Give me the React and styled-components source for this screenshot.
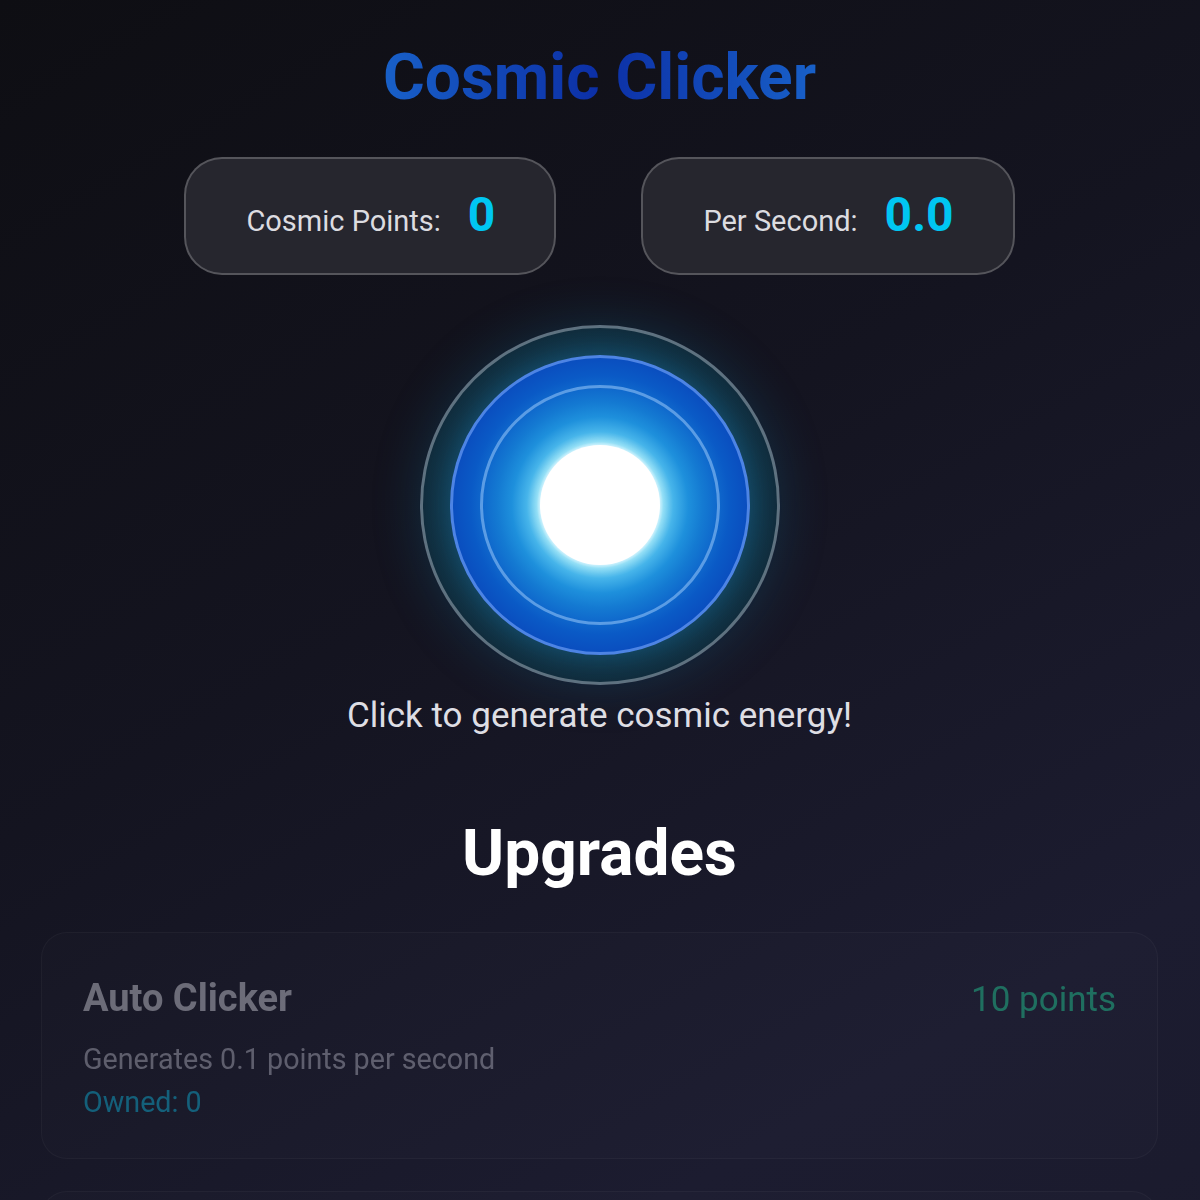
import React from 'react';
import styled, { createGlobalStyle } from 'styled-components';

const GlobalStyle = createGlobalStyle`
  * { box-sizing: border-box; }
  html, body {
    margin: 0;
    padding: 0;
    background: #111118;
  }
  body {
    font-family: Roboto, "Liberation Sans", sans-serif;
    color: #fff;
  }
`;

const Page = styled.div`
  min-height: 1200px;
  padding: 40px 42px 0 41px;
  background: linear-gradient(150deg, #0e0e13 0%, #141420 40%, #1c1c30 75%, #1a1a2c 100%);
  display: flex;
  flex-direction: column;
  align-items: center;
`;

const Title = styled.h1`
  margin: 0;
  font-size: 64px;
  line-height: 1.2;
  font-weight: 700;
  background: linear-gradient(90deg, #1860c8 0%, #0c2fa6 50%, #1860c8 100%);
  -webkit-background-clip: text;
  background-clip: text;
  color: transparent;
`;

const Stats = styled.div`
  display: flex;
  gap: 85px;
  margin-top: 40px;
`;

const StatCard = styled.div`
  display: flex;
  align-items: baseline;
  gap: 27px;
  padding: 27px 59px 30px 60px;
  border-radius: 38px;
  background: #26262e;
  border: 2px solid rgba(255, 255, 255, 0.22);
`;

const StatLabel = styled.span`
  font-size: 29px;
  color: #dcdce0;
`;

const StatValue = styled.span`
  font-size: 48px;
  font-weight: 700;
  color: #00c6f2;
`;

const OrbWrap = styled.div`
  margin-top: 50px;
  width: 360px;
  height: 360px;
  border-radius: 50%;
  border: 3px solid rgba(190, 200, 210, 0.45);
  background: radial-gradient(circle closest-side, #10465e 0%, #0f3a4c 80%, #112c3c 100%);
  box-shadow: 0 0 50px rgba(20, 140, 190, 0.22);
  display: flex;
  align-items: center;
  justify-content: center;
`;

const Orb = styled.button`
  width: 300px;
  height: 300px;
  border-radius: 50%;
  border: 3px solid #4d84e4;
  padding: 0;
  cursor: pointer;
  background: radial-gradient(
    circle closest-side,
    #ffffff 0%,
    #ffffff 40%,
    #8edcf4 43%,
    #46b4ea 50%,
    #1e90dc 60%,
    #147ad2 70%,
    #0f68cc 80%,
    #0a5ac6 88%,
    #0a4ebf 100%
  );
  box-shadow: 0 0 30px rgba(40, 150, 230, 0.3);
  display: flex;
  align-items: center;
  justify-content: center;
`;

const InnerRing = styled.div`
  width: 240px;
  height: 240px;
  border-radius: 50%;
  border: 3px solid rgba(110, 170, 235, 0.8);
  display: flex;
  align-items: center;
  justify-content: center;
`;

const Core = styled.div`
  width: 120px;
  height: 120px;
  border-radius: 50%;
  background: #ffffff;
  box-shadow: 0 0 10px 2px rgba(170, 235, 255, 0.6);
`;

const Hint = styled.p`
  margin: 10px 0 0;
  font-size: 35px;
  line-height: 1.2;
  color: #dedee4;
`;

const SectionTitle = styled.h2`
  margin: 79px 0 0;
  font-size: 64px;
  line-height: 1.2;
  font-weight: 700;
  color: #ffffff;
`;

const UpgradeList = styled.div`
  align-self: stretch;
  display: flex;
  flex-direction: column;
  gap: 32px;
  margin-top: 39px;
`;

const UpgradeCard = styled.div`
  padding: 43px 41px 39px 41px;
  border-radius: 26px;
  background: rgba(255, 255, 255, 0.025);
  border: 1px solid rgba(255, 255, 255, 0.08);
  opacity: ${p => (p.$disabled ? 0.45 : 1)};
`;

const UpgradeHead = styled.div`
  display: flex;
  justify-content: space-between;
  align-items: baseline;
`;

const UpgradeName = styled.h3`
  margin: 0;
  font-size: 38px;
  line-height: 1.2;
  font-weight: 700;
  color: #d4d4de;
`;

const Cost = styled.span`
  font-size: 35px;
  color: #24d49a;
`;

const Desc = styled.p`
  margin: 21px 0 0;
  font-size: 28.7px;
  line-height: 1.2;
  color: #b4b4c2;
`;

const Owned = styled.p`
  margin: 8px 0 0;
  font-size: 28.7px;
  line-height: 1.2;
  color: #10b8e0;
`;

const upgrades = [
  { name: 'Auto Clicker', cost: 10, desc: 'Generates 0.1 points per second', owned: 0 },
  { name: 'Star Collector', cost: 100, desc: 'Generates 1 point per second', owned: 0 },
];

export default function App() {
  const points = 0;
  const perSecond = 0;

  return (
    <>
      <GlobalStyle />
      <Page>
        <Title>Cosmic Clicker</Title>

        <Stats>
          <StatCard>
            <StatLabel>Cosmic Points:</StatLabel>
            <StatValue>{points}</StatValue>
          </StatCard>
          <StatCard>
            <StatLabel>Per Second:</StatLabel>
            <StatValue>{perSecond.toFixed(1)}</StatValue>
          </StatCard>
        </Stats>

        <OrbWrap>
          <Orb aria-label="Generate cosmic energy">
            <InnerRing>
              <Core />
            </InnerRing>
          </Orb>
        </OrbWrap>
        <Hint>Click to generate cosmic energy!</Hint>

        <SectionTitle>Upgrades</SectionTitle>

        <UpgradeList>
          {upgrades.map(u => (
            <UpgradeCard key={u.name} $disabled={points < u.cost}>
              <UpgradeHead>
                <UpgradeName>{u.name}</UpgradeName>
                <Cost>{u.cost} points</Cost>
              </UpgradeHead>
              <Desc>{u.desc}</Desc>
              <Owned>Owned: {u.owned}</Owned>
            </UpgradeCard>
          ))}
        </UpgradeList>
      </Page>
    </>
  );
}
